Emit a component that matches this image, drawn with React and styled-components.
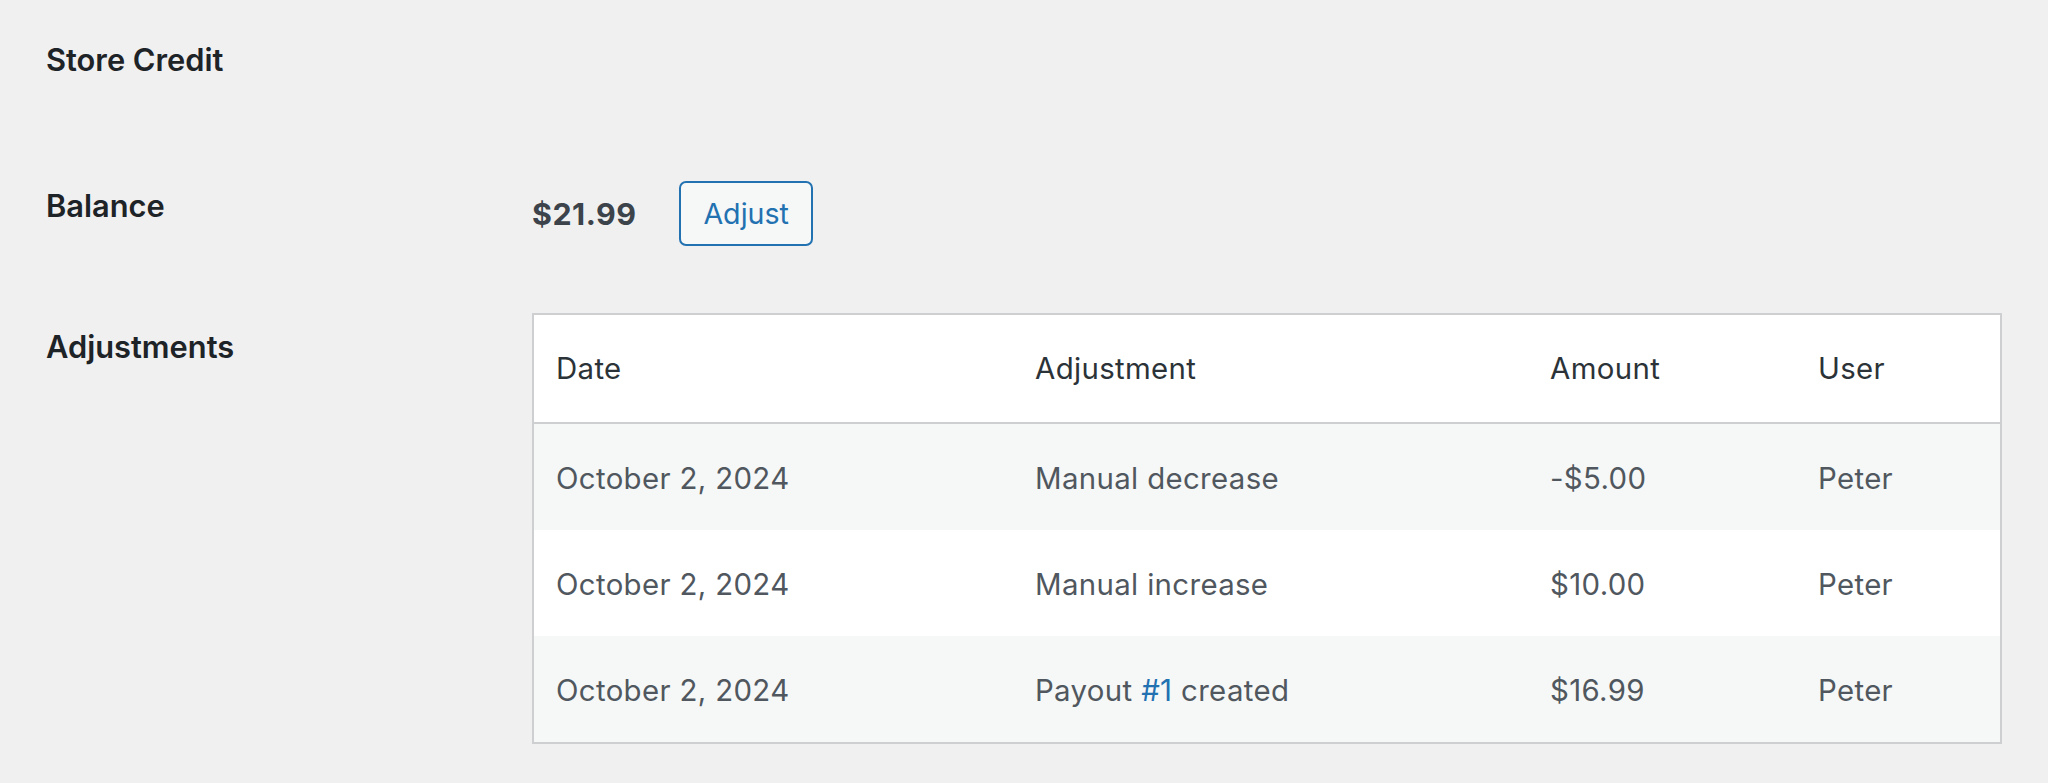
import React from 'react';
import styled, { createGlobalStyle } from 'styled-components';

const adjustments = [
  { date: 'October 2, 2024', note: 'Manual decrease', amount: '-$5.00', user: 'Peter' },
  { date: 'October 2, 2024', note: 'Manual increase', amount: '$10.00', user: 'Peter' },
  { date: 'October 2, 2024', note: 'Payout', payout: 1, amount: '$16.99', user: 'Peter' },
];

const GlobalStyle = createGlobalStyle`
  html, body {
    margin: 0;
    background: #f0f0f1;
  }

  body {
    font-family: Inter, "Noto Sans", sans-serif;
    color: #3c434a;
  }
`;

const Page = styled.div`
  padding: 40px 46px 40px 46px;
`;

const Heading = styled.h2`
  margin: 0 0 101px;
  font-size: 30.8px;
  line-height: 40px;
  font-weight: 600;
  color: #1d2327;
`;

const FormRow = styled.div`
  display: grid;
  grid-template-columns: 486px 1470px;
  align-items: start;
  margin-bottom: ${(p) => p.$gap || 0}px;
`;

const Label = styled.div`
  padding-top: ${(p) => p.$offset}px;
  font-size: 30.8px;
  line-height: 40px;
  font-weight: 600;
  color: #1d2327;
`;

const BalanceLine = styled.div`
  display: flex;
  align-items: center;
  gap: 43px;
`;

const Amount = styled.span`
  font-size: 30.4px;
  font-weight: 700;
  letter-spacing: 0.5px;
  color: #3c434a;
`;

const Button = styled.button`
  height: 65px;
  padding: 0 22px;
  border: 2px solid #2271b1;
  border-radius: 7px;
  background: #f6f7f7;
  color: #2271b1;
  font-family: inherit;
  font-size: 28.6px;
  cursor: pointer;
`;

const Table = styled.table`
  width: 1470px;
  border-collapse: collapse;
  border: 2px solid #cdcfd1;
  background: #fff;
  table-layout: fixed;
  font-size: 29.4px;
  letter-spacing: 0.35px;
`;

const HeadCell = styled.th`
  height: 107px;
  padding: 0 22px;
  text-align: left;
  font-weight: 400;
  color: #2c3338;
  border-bottom: 2px solid #cdcfd1;
`;

const Row = styled.tr`
  background: ${(p) => (p.$striped ? '#f6f7f7' : '#fff')};
`;

const Cell = styled.td`
  height: 104px;
  padding: 2px 22px 0;
  color: #50575e;
`;

const Link = styled.a`
  color: #2271b1;
  text-decoration: none;
`;

export default function App() {
  return (
    <>
      <GlobalStyle />
      <Page>
        <Heading>Store Credit</Heading>

        <FormRow $gap={67}>
          <Label $offset={5}>Balance</Label>
          <BalanceLine>
            <Amount>$21.99</Amount>
            <Button>Adjust</Button>
          </BalanceLine>
        </FormRow>

        <FormRow>
          <Label $offset={14}>Adjustments</Label>
          <Table>
            <colgroup>
              <col style={{ width: 480 }} />
              <col style={{ width: 515 }} />
              <col style={{ width: 268 }} />
              <col />
            </colgroup>
            <thead>
              <tr>
                <HeadCell>Date</HeadCell>
                <HeadCell>Adjustment</HeadCell>
                <HeadCell>Amount</HeadCell>
                <HeadCell>User</HeadCell>
              </tr>
            </thead>
            <tbody>
              {adjustments.map((a, i) => (
                <Row key={i} $striped={i % 2 === 0}>
                  <Cell>{a.date}</Cell>
                  <Cell>
                    {a.payout ? (
                      <>
                        {a.note} <Link href="#">#{a.payout}</Link> created
                      </>
                    ) : (
                      a.note
                    )}
                  </Cell>
                  <Cell>{a.amount}</Cell>
                  <Cell>{a.user}</Cell>
                </Row>
              ))}
            </tbody>
          </Table>
        </FormRow>
      </Page>
    </>
  );
}
